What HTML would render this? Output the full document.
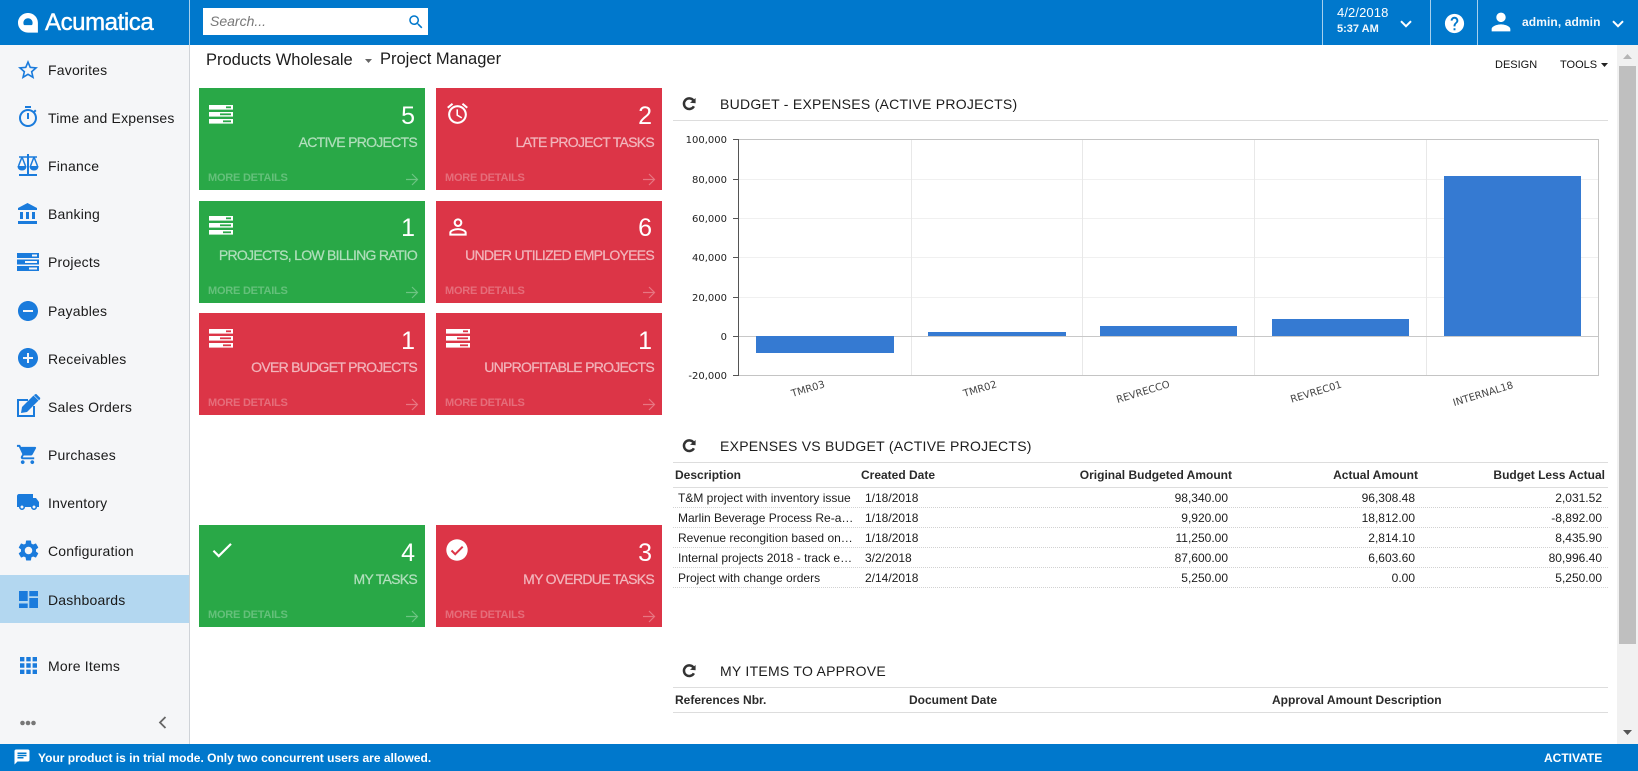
<!DOCTYPE html>
<html lang="en"><head><meta charset="utf-8"><title>Project Manager</title>
<style>
html,body{margin:0;padding:0;background:#fff}
body{width:1638px;height:771px;overflow:hidden;position:relative;font-family:"Liberation Sans",Arial,sans-serif;color:#1c1c1c}
.a,.card,.card *{position:absolute}
svg{position:absolute;overflow:visible}
.t{position:absolute;white-space:nowrap}
#side{position:absolute;left:0;top:45px;width:189px;height:699px;background:#f5f6f8;border-right:1px solid #cfd3d8}
.nav{position:absolute;left:48px;font-size:14px;line-height:20px;white-space:nowrap;letter-spacing:.2px;color:#1a1a1a}
.ic{fill:#1a7bdc}
.card{width:226px;height:102px;color:#fff}
.g{background:#29a847}.r{background:#dc3547}
.n{right:10px;top:13px;font-size:25px;line-height:30px}
.h{right:8px;top:45px;font-size:14px;line-height:18px;color:rgba(255,255,255,.6);white-space:nowrap;letter-spacing:-.72px;-webkit-text-stroke:.2px rgba(255,255,255,.6)}
.m{left:9px;top:83px;font-size:11px;line-height:14px;font-weight:bold;color:rgba(255,255,255,.28);white-space:nowrap;letter-spacing:-.22px}
.arr{left:207px;top:85px}
.sec{position:absolute;left:720px;font-size:14px;line-height:18px;white-space:nowrap;color:#1c1c1c;letter-spacing:.26px}
.ln{position:absolute;left:673px;width:935px;height:1px;background:#ddd}
.d{position:absolute;left:673px;width:935px;height:0;border-bottom:1px dotted #d2d2d2}
.th{position:absolute;font-size:12px;line-height:16px;font-weight:bold;color:#2a2a2a;white-space:nowrap}
.td{position:absolute;font-size:12px;line-height:16px;color:#1c1c1c;white-space:nowrap}
.rt{transform:translateX(-100%)}
</style></head><body>
<svg width="0" height="0" style="position:absolute">
<defs>
<g id="srv-g"><rect x="0" y="0" width="24" height="4.6" fill="#fff"/><rect x="17" y="1.4" width="5" height="1.8" fill="#29a847"/><rect x="0" y="7" width="24" height="4.6" fill="#fff"/><rect x="11" y="8.4" width="11" height="1.8" fill="#29a847"/><rect x="0" y="14" width="24" height="4.6" fill="#fff"/><rect x="14" y="15.4" width="8" height="1.8" fill="#29a847"/></g>
<g id="srv-r"><rect x="0" y="0" width="24" height="4.6" fill="#fff"/><rect x="17" y="1.4" width="5" height="1.8" fill="#dc3547"/><rect x="0" y="7" width="24" height="4.6" fill="#fff"/><rect x="11" y="8.4" width="11" height="1.8" fill="#dc3547"/><rect x="0" y="14" width="24" height="4.6" fill="#fff"/><rect x="14" y="15.4" width="8" height="1.8" fill="#dc3547"/></g>
<g id="arrow"><path d="M0 6.5H11M6 1l5.5 5.5L6 12" fill="none" stroke="#fff" stroke-opacity=".32" stroke-width="1.2"/></g>
<g id="ref"><path d="M12.4 4.400A5.300 5.300 0 1 0 12.900 10.300" fill="none" stroke="#333" stroke-width="2.500"/><path d="M9 6.800L14.600 2v5.200z" fill="#333"/></g>
</defs></svg>

<!-- header -->
<div class="a" style="left:0;top:0;width:1638px;height:45px;background:#0078cc"></div>
<div class="a" style="left:189px;top:0;width:1px;height:45px;background:rgba(255,255,255,.65)"></div>
<svg style="left:18px;top:13px" width="20" height="20" viewBox="0 0 20 20"><path fill="#fff" fill-rule="evenodd" d="M10 0C4.500 0 0 4.300 0 9.800 0 15.300 4.400 19.600 10 19.600h9.900V9.800C19.900 4.300 15.500 0 10 0zm0 5.200c2.600 0 4.600 2.100 4.600 4.600 0 .6-.1 1.300-.3 1.800-.2.300-.5.500-.8.500H6.500c-.3 0-.6-.2-.8-.5-.2-.5-.3-1.200-.3-1.800C5.400 7.300 7.400 5.200 10 5.200z"/></svg>
<div class="t" style="left:45px;top:8px;font-size:24px;line-height:30px;color:#fff;letter-spacing:-.42px;-webkit-text-stroke:.45px #fff">Acumatica</div>
<div class="a" style="left:203px;top:8px;width:225px;height:27px;background:#fff"></div>
<div class="t" style="left:210px;top:13px;font-size:14px;line-height:17px;font-style:italic;color:#777">Search...</div>
<svg style="left:407px;top:13px" width="18" height="18" viewBox="0 0 24 24"><path fill="#0078cc" d="M15.5 14h-.79l-.28-.27C15.41 12.59 16 11.11 16 9.5 16 5.910 13.090 3 9.500 3S3 5.910 3 9.500 5.910 16 9.500 16c1.610 0 3.090-.59 4.230-1.570l.27.28v.79l5 4.990L20.490 19l-4.990-5zm-6 0C7.010 14 5 11.990 5 9.500S7.010 5 9.500 5 14 7.010 14 9.500 11.990 14 9.500 14z"/></svg>

<div class="a" style="left:1322px;top:0;width:1px;height:45px;background:rgba(255,255,255,.65)"></div>
<div class="a" style="left:1430px;top:0;width:1px;height:45px;background:rgba(255,255,255,.65)"></div>
<div class="a" style="left:1477px;top:0;width:1px;height:45px;background:rgba(255,255,255,.65)"></div>
<div class="t" style="left:1337px;top:5px;font-size:13px;line-height:16px;color:#fff;letter-spacing:.1px">4/2/2018</div>
<div class="t" style="left:1337px;top:22px;font-size:11px;line-height:14px;color:#fff;font-weight:bold;opacity:.95">5:37 AM</div>
<svg style="left:1400px;top:20px" width="12" height="8" viewBox="0 0 12 8"><path d="M1 1.200l5 5 5-5" fill="none" stroke="#fff" stroke-width="2"/></svg>
<svg style="left:1442.500px;top:11.500px" width="23" height="23" viewBox="0 0 24 24"><path fill="#fff" d="M12 2C6.480 2 2 6.480 2 12s4.480 10 10 10 10-4.480 10-10S17.520 2 12 2zm1 17h-2v-2h2v2zm2.070-7.750l-.9.920C13.450 12.900 13 13.500 13 15h-2v-.5c0-1.100.45-2.100 1.170-2.830l1.240-1.260c.37-.36.590-.86.590-1.410 0-1.100-.9-2-2-2s-2 .9-2 2H8c0-2.210 1.790-4 4-4s4 1.790 4 4c0 .88-.36 1.680-.93 2.250z"/></svg>
<svg style="left:1486.500px;top:8px" width="28" height="28" viewBox="0 0 24 24"><path fill="#fff" d="M12 12c2.210 0 4-1.790 4-4s-1.790-4-4-4-4 1.790-4 4 1.790 4 4 4zm0 2c-2.670 0-8 1.340-8 4v2h16v-2c0-2.660-5.330-4-8-4z"/></svg>
<div class="t" style="left:1522px;top:14px;font-size:12px;line-height:16px;color:#fff;font-weight:bold;letter-spacing:.1px;opacity:.95">admin, admin</div>
<svg style="left:1612px;top:20px" width="12" height="8" viewBox="0 0 12 8"><path d="M1 1.200l5 5 5-5" fill="none" stroke="#fff" stroke-width="2"/></svg>

<!-- sidebar -->
<div id="side"></div>
<div class="a" style="left:0;top:575px;width:189px;height:48px;background:#b3d7f0"></div>

<svg style="left:16px;top:58px" width="24" height="24" viewBox="0 0 24 24"><path class="ic" d="M22 9.240l-7.190-.62L12 2 9.190 8.630 2 9.240l5.460 4.730L5.820 21 12 17.270 18.180 21l-1.630-7.030L22 9.240zM12 15.400l-3.760 2.270 1-4.280-3.320-2.880 4.380-.38L12 6.100l1.710 4.040 4.380.38-3.320 2.880 1 4.280L12 15.400z"/></svg>
<div class="nav" style="top:60px">Favorites</div>
<svg style="left:16px;top:105px" width="24" height="24" viewBox="0 0 24 24"><path class="ic" d="M15 1H9v2h6V1zm-4 13h2V8h-2v6zm8.030-6.610l1.420-1.420c-.43-.51-.9-.99-1.410-1.410l-1.420 1.420C16.070 4.740 14.120 4 12 4c-4.970 0-9 4.030-9 9s4.020 9 9 9 9-4.030 9-9c0-2.120-.74-4.070-1.970-5.610zM12 20c-3.870 0-7-3.130-7-7s3.130-7 7-7 7 3.130 7 7-3.130 7-7 7z"/></svg>
<div class="nav" style="top:108px">Time and Expenses</div>
<svg style="left:17px;top:154px" width="22" height="22" viewBox="0 0 22 22"><path fill="none" stroke="#1a7bdc" stroke-width="1.500" d="M5 3L1.500 12M5 3l3.500 9M17 3l-3.500 9M17 3l3.500 9"/><path fill="#1a7bdc" d="M10 0h2v20h-2zM2 2.200h18v1.600H2zM2 20h18v2H2zM.5 12h9c0 3-2 4.500-4.500 4.500S.5 15 .5 12zM12.500 12h9c0 3-2 4.500-4.500 4.500s-4.500-1.500-4.500-4.500z"/></svg>
<div class="nav" style="top:156px">Finance</div>
<svg style="left:16px;top:202px" width="24" height="24" viewBox="0 0 24 24"><path class="ic" d="M4 10v7h3v-7H4zm6 0v7h3v-7h-3zM2 22h19v-3H2v3zm14-12v7h3v-7h-3zm-4.500-9L2 6v2h19V6l-9.500-5z"/></svg>
<div class="nav" style="top:204px">Banking</div>
<svg style="left:17px;top:253px" width="22" height="18" viewBox="0 0 22 18"><path class="ic" d="M0 0h22v5H0zM0 6.500h22v5H0zM0 13h22v5H0z"/><path fill="#f5f6f8" d="M15 1.500h5v2h-5zM8 8h12v2H8zM12 14.500h8v2h-8z"/></svg>
<div class="nav" style="top:252px">Projects</div>
<svg style="left:16px;top:298.500px" width="24" height="24" viewBox="0 0 24 24"><path class="ic" d="M12 2C6.480 2 2 6.480 2 12s4.480 10 10 10 10-4.480 10-10S17.520 2 12 2zm5 11H7v-2h10v2z"/></svg>
<div class="nav" style="top:301px">Payables</div>
<svg style="left:16px;top:346px" width="24" height="24" viewBox="0 0 24 24"><path class="ic" d="M12 2C6.480 2 2 6.480 2 12s4.480 10 10 10 10-4.480 10-10S17.520 2 12 2zm5 11h-4v4h-2v-4H7v-2h4V7h2v4h4v2z"/></svg>
<div class="nav" style="top:349px">Receivables</div>
<svg style="left:16px;top:394px" width="25" height="24" viewBox="0 0 25 24"><path fill="none" stroke="#1a7bdc" stroke-width="2" d="M12 6H2v16h16V12"/><path class="ic" d="M5 19l1-6L17.500 1.500l5 5L11 18zM19 .2l1.300-.2 4 4-.3 1.200-1 1-5-5z"/></svg>
<div class="nav" style="top:397px">Sales Orders</div>
<svg style="left:16px;top:443px" width="23" height="23" viewBox="0 0 24 24"><path class="ic" d="M7 18c-1.100 0-1.990.9-1.990 2S5.900 22 7 22s2-.9 2-2-.9-2-2-2zM1 2v2h2l3.600 7.590-1.350 2.450c-.16.28-.25.61-.25.96 0 1.100.9 2 2 2h12v-2H7.420c-.14 0-.25-.11-.25-.25l.03-.12.9-1.630h7.450c.75 0 1.410-.41 1.750-1.030l3.580-6.490c.08-.14.12-.31.12-.48 0-.55-.45-1-1-1H5.210l-.94-2H1zm16 16c-1.100 0-1.990.9-1.990 2s.89 2 1.990 2 2-.9 2-2-.9-2-2-2z"/></svg>
<div class="nav" style="top:445px">Purchases</div>
<svg style="left:16px;top:490px" width="24" height="24" viewBox="0 0 24 24"><path class="ic" d="M20 8h-3V4H3c-1.100 0-2 .9-2 2v11h2c0 1.660 1.340 3 3 3s3-1.340 3-3h6c0 1.660 1.340 3 3 3s3-1.340 3-3h2v-5l-3-4zM6 18.500c-.83 0-1.500-.67-1.500-1.500s.67-1.500 1.500-1.500 1.500.67 1.500 1.500-.67 1.500-1.500 1.500zm12 0c-.83 0-1.500-.67-1.500-1.500s.67-1.500 1.500-1.500 1.500.67 1.500 1.500-.67 1.500-1.500 1.500z"/></svg>
<div class="nav" style="top:493px">Inventory</div>
<svg style="left:15.500px;top:538px" width="25" height="25" viewBox="0 0 24 24"><path class="ic" d="M19.140 12.940c.04-.3.06-.61.06-.94 0-.32-.02-.64-.07-.94l2.030-1.580c.18-.14.23-.41.12-.61l-1.920-3.320c-.12-.22-.37-.29-.59-.22l-2.390.96c-.5-.38-1.030-.7-1.620-.94l-.36-2.540c-.04-.24-.24-.41-.48-.41h-3.840c-.24 0-.43.17-.47.41l-.36 2.540c-.59.24-1.130.57-1.620.94l-2.390-.96c-.22-.08-.47 0-.59.22L2.740 8.870c-.12.21-.08.47.12.61l2.030 1.580c-.05.3-.09.63-.09.94s.02.64.07.94l-2.030 1.580c-.18.14-.23.41-.12.61l1.920 3.320c.12.22.37.29.59.22l2.390-.96c.5.38 1.030.7 1.620.94l.36 2.540c.05.24.24.41.48.41h3.840c.24 0 .44-.17.47-.41l.36-2.540c.59-.24 1.130-.56 1.620-.94l2.390.96c.22.08.47 0 .59-.22l1.920-3.320c.12-.22.07-.47-.12-.61l-2.010-1.580zM12 15.600c-1.980 0-3.600-1.620-3.600-3.600s1.620-3.600 3.600-3.600 3.600 1.620 3.600 3.600-1.620 3.600-3.600 3.600z"/></svg>
<div class="nav" style="top:541px">Configuration</div>
<svg style="left:19px;top:590px" width="19" height="19" viewBox="0 0 19 19"><path class="ic" d="M0 1h8.700v10H0zM0 13.500h8.700V18H0zM10.300 1H19v5.300h-8.700zM10.300 8H19v10h-8.700z"/></svg>
<div class="nav" style="top:590px">Dashboards</div>
<svg style="left:20px;top:657px" width="17" height="17" viewBox="0 0 17 17"><path class="ic" d="M0 0h4.400v4.400H0zM6.300 0h4.400v4.400H6.300zM12.600 0H17v4.400h-4.400zM0 6.300h4.400v4.400H0zM6.300 6.300h4.400v4.400H6.300zM12.600 6.300H17v4.400h-4.400zM0 12.600h4.400V17H0zM6.300 12.600h4.400V17H6.300zM12.600 12.600H17V17h-4.400z"/></svg>
<div class="nav" style="top:656px">More Items</div>
<svg style="left:20px;top:720px" width="16" height="6" viewBox="0 0 16 6"><circle cx="2.500" cy="3" r="2.300" fill="#777"/><circle cx="8" cy="3" r="2.300" fill="#777"/><circle cx="13.500" cy="3" r="2.300" fill="#777"/></svg>
<svg style="left:158px;top:716px" width="9" height="13" viewBox="0 0 9 13"><path d="M7.500 1L2 6.500 7.500 12" fill="none" stroke="#666" stroke-width="1.800"/></svg>

<!-- breadcrumb -->
<div class="t" style="left:206px;top:50px;font-size:16.5px;line-height:20px">Products Wholesale</div>
<svg style="left:365px;top:59px" width="7" height="4" viewBox="0 0 7 4"><path d="M0 0h7L3.500 4z" fill="#666"/></svg>
<div class="t" style="left:380px;top:49px;font-size:16.5px;line-height:20px">Project Manager</div>
<div class="t" style="left:1495px;top:58px;font-size:11px;line-height:14px;color:#111">DESIGN</div>
<div class="t" style="left:1560px;top:58px;font-size:11px;line-height:14px;color:#111">TOOLS</div>
<svg style="left:1601px;top:63px" width="7" height="4" viewBox="0 0 7 4"><path d="M0 0h7L3.500 4z" fill="#222"/></svg>

<!-- cards -->
<div class="card g" style="left:199px;top:88px"><svg style="left:10px;top:17px" width="24" height="19"><use href="#srv-g"/></svg><div class="n">5</div><div class="h">ACTIVE PROJECTS</div><div class="m">MORE DETAILS</div><svg class="arr" width="12" height="13"><use href="#arrow"/></svg></div>
<div class="card r" style="left:436px;top:88px"><svg style="left:9px;top:13px" width="25" height="25" viewBox="0 0 24 24"><path fill="#fff" d="M22 5.720l-4.600-3.860-1.290 1.530 4.600 3.860L22 5.720zM7.880 3.390L6.600 1.860 2 5.710l1.290 1.530 4.590-3.850zM12.500 8H11v6l4.750 2.850.75-1.230-4-2.370V8zM12 4c-4.970 0-9 4.030-9 9s4.030 9 9 9 9-4.030 9-9-4.030-9-9-9zm0 16c-3.870 0-7-3.130-7-7s3.130-7 7-7 7 3.130 7 7-3.130 7-7 7z"/></svg><div class="n">2</div><div class="h">LATE PROJECT TASKS</div><div class="m">MORE DETAILS</div><svg class="arr" width="12" height="13"><use href="#arrow"/></svg></div>
<div class="card g" style="left:199px;top:201px"><svg style="left:10px;top:15px" width="24" height="19"><use href="#srv-g"/></svg><div class="n" style="top:12px">1</div><div class="h">PROJECTS, LOW BILLING RATIO</div><div class="m">MORE DETAILS</div><svg class="arr" width="12" height="13"><use href="#arrow"/></svg></div>
<div class="card r" style="left:436px;top:201px"><svg style="left:8.500px;top:12.500px" width="26" height="26" viewBox="0 0 24 24"><path fill="#fff" d="M12 5.900c1.160 0 2.100.94 2.100 2.100s-.94 2.100-2.100 2.100S9.900 9.160 9.900 8s.94-2.100 2.100-2.100m0 9c2.970 0 6.100 1.460 6.100 2.100v1.100H5.900V17c0-.64 3.130-2.100 6.100-2.100M12 4C9.790 4 8 5.790 8 8s1.790 4 4 4 4-1.790 4-4-1.790-4-4-4zm0 9c-2.670 0-8 1.340-8 4v3h16v-3c0-2.660-5.330-4-8-4z"/></svg><div class="n" style="top:12px">6</div><div class="h">UNDER UTILIZED EMPLOYEES</div><div class="m">MORE DETAILS</div><svg class="arr" width="12" height="13"><use href="#arrow"/></svg></div>
<div class="card r" style="left:199px;top:313px"><svg style="left:10px;top:16px" width="24" height="19"><use href="#srv-r"/></svg><div class="n">1</div><div class="h">OVER BUDGET PROJECTS</div><div class="m">MORE DETAILS</div><svg class="arr" width="12" height="13"><use href="#arrow"/></svg></div>
<div class="card r" style="left:436px;top:313px"><svg style="left:10px;top:16px" width="24" height="19"><use href="#srv-r"/></svg><div class="n">1</div><div class="h">UNPROFITABLE PROJECTS</div><div class="m">MORE DETAILS</div><svg class="arr" width="12" height="13"><use href="#arrow"/></svg></div>
<div class="card g" style="left:199px;top:525px"><svg style="left:9.500px;top:12px" width="26" height="26" viewBox="0 0 24 24"><path fill="#fff" d="M9 16.200L4.800 12l-1.400 1.400L9 19 21 7l-1.400-1.400L9 16.200z"/></svg><div class="n">4</div><div class="h">MY TASKS</div><div class="m">MORE DETAILS</div><svg class="arr" width="12" height="13"><use href="#arrow"/></svg></div>
<div class="card r" style="left:436px;top:525px"><svg style="left:10px;top:14px" width="22" height="22" viewBox="0 0 22 22"><circle cx="11" cy="11" r="10.700" fill="#fff"/><path d="M5.500 11.500l3.700 3.700 7.500-7.500" fill="none" stroke="#dc3547" stroke-width="2"/></svg><div class="n">3</div><div class="h">MY OVERDUE TASKS</div><div class="m">MORE DETAILS</div><svg class="arr" width="12" height="13"><use href="#arrow"/></svg></div>

<!-- section 1 -->
<svg style="left:681px;top:96px" width="16" height="16" viewBox="0 0 16 16"><use href="#ref"/></svg>
<div class="sec" style="top:95px">BUDGET - EXPENSES (ACTIVE PROJECTS)</div>
<div class="ln" style="top:120px"></div>

<svg style="left:0;top:0" width="1638" height="771" viewBox="0 0 1638 771">
<g stroke="#f0f0f0" stroke-width="1"><path d="M738.500 179.500H1598M738.500 218.500H1598M738.500 257.500H1598M738.500 297.500H1598"/></g>
<g stroke="#e8e8e8" stroke-width="1"><path d="M911.500 139V375M1082.500 139V375M1254.500 139V375M1426.500 139V375"/></g>
<path d="M738 139.500H1598.500V375.500H738" fill="none" stroke="#c4c4c4"/>
<path d="M738 336.500H1598" stroke="#c8c8c8"/>
<path d="M738.500 139V376M733 139.500H738M733 179.500H738M733 218.500H738M733 257.500H738M733 297.500H738M733 336.500H738M733 375.500H738" stroke="#555" fill="none"/>
<g fill="#357ad2"><rect x="756" y="336" width="138" height="17"/><rect x="928" y="332" width="138" height="4"/><rect x="1100" y="326" width="137" height="10"/><rect x="1272" y="319" width="137" height="17"/><rect x="1444" y="176" width="137" height="160"/></g>
<g font-family="'DejaVu Sans',sans-serif" font-size="10" fill="#222" text-anchor="end"><text x="727" y="143">100,000</text><text x="727" y="183">80,000</text><text x="727" y="222">60,000</text><text x="727" y="261">40,000</text><text x="727" y="301">20,000</text><text x="727" y="340">0</text><text x="727" y="379">-20,000</text></g>
<g font-family="'DejaVu Sans',sans-serif" font-size="10" fill="#444" text-anchor="middle"><text transform="translate(809 392) rotate(-17)">TMR03</text><text transform="translate(981 392) rotate(-17)">TMR02</text><text transform="translate(1144 395) rotate(-17)">REVRECCO</text><text transform="translate(1317 395) rotate(-17)">REVREC01</text><text transform="translate(1484 397) rotate(-17)">INTERNAL18</text></g>
</svg>

<!-- section 2 -->
<svg style="left:681px;top:438px" width="16" height="16" viewBox="0 0 16 16"><use href="#ref"/></svg>
<div class="sec" style="top:437px">EXPENSES VS BUDGET (ACTIVE PROJECTS)</div>
<div class="ln" style="top:462px"></div>
<div class="th" style="left:675px;top:467px">Description</div>
<div class="th" style="left:861px;top:467px">Created Date</div>
<div class="th rt" style="left:1232px;top:467px">Original Budgeted Amount</div>
<div class="th rt" style="left:1418px;top:467px">Actual Amount</div>
<div class="th rt" style="left:1605px;top:467px">Budget Less Actual</div>
<div class="ln" style="top:487px"></div>

<div class="td" style="left:678px;top:490px">T&amp;M project with inventory issue</div><div class="td" style="left:865px;top:490px">1/18/2018</div><div class="td rt" style="left:1228px;top:490px">98,340.00</div><div class="td rt" style="left:1415px;top:490px">96,308.48</div><div class="td rt" style="left:1602px;top:490px">2,031.52</div>
<div class="d" style="top:507px"></div>
<div class="td" style="left:678px;top:510px">Marlin Beverage Process Re-a…</div><div class="td" style="left:865px;top:510px">1/18/2018</div><div class="td rt" style="left:1228px;top:510px">9,920.00</div><div class="td rt" style="left:1415px;top:510px">18,812.00</div><div class="td rt" style="left:1602px;top:510px">-8,892.00</div>
<div class="d" style="top:527px"></div>
<div class="td" style="left:678px;top:530px">Revenue recongition based on…</div><div class="td" style="left:865px;top:530px">1/18/2018</div><div class="td rt" style="left:1228px;top:530px">11,250.00</div><div class="td rt" style="left:1415px;top:530px">2,814.10</div><div class="td rt" style="left:1602px;top:530px">8,435.90</div>
<div class="d" style="top:547px"></div>
<div class="td" style="left:678px;top:550px">Internal projects 2018 - track e…</div><div class="td" style="left:865px;top:550px">3/2/2018</div><div class="td rt" style="left:1228px;top:550px">87,600.00</div><div class="td rt" style="left:1415px;top:550px">6,603.60</div><div class="td rt" style="left:1602px;top:550px">80,996.40</div>
<div class="d" style="top:567px"></div>
<div class="td" style="left:678px;top:570px">Project with change orders</div><div class="td" style="left:865px;top:570px">2/14/2018</div><div class="td rt" style="left:1228px;top:570px">5,250.00</div><div class="td rt" style="left:1415px;top:570px">0.00</div><div class="td rt" style="left:1602px;top:570px">5,250.00</div>
<div class="d" style="top:587px"></div>

<!-- section 3 -->
<svg style="left:681px;top:663px" width="16" height="16" viewBox="0 0 16 16"><use href="#ref"/></svg>
<div class="sec" style="top:662px">MY ITEMS TO APPROVE</div>
<div class="ln" style="top:687px"></div>
<div class="th" style="left:675px;top:692px">References Nbr.</div>
<div class="th" style="left:909px;top:692px">Document Date</div>
<div class="th" style="left:1272px;top:692px">Approval Amount Description</div>
<div class="ln" style="top:712px"></div>

<!-- scrollbar -->
<div class="a" style="left:1617px;top:45px;width:21px;height:699px;background:#f1f1f1"></div>
<div class="a" style="left:1619px;top:66px;width:17px;height:578px;background:#bfbfbf"></div>
<svg style="left:1623px;top:54px" width="9" height="5" viewBox="0 0 9 5"><path d="M0 5h9L4.500 0z" fill="#b5b5b5"/></svg>
<svg style="left:1623px;top:730px" width="9" height="5" viewBox="0 0 9 5"><path d="M0 0h9L4.500 5z" fill="#555"/></svg>

<!-- footer -->
<div class="a" style="left:0;top:744px;width:1638px;height:27px;background:#0078cc"></div>
<svg style="left:12.500px;top:748px" width="18" height="18" viewBox="0 0 24 24"><path fill="#fff" d="M20 2H4c-1.100 0-1.990.9-1.990 2L2 22l4-4h14c1.100 0 2-.9 2-2V4c0-1.100-.9-2-2-2zM6 9h12v2H6V9zm8 5H6v-2h8v2zm4-6H6V6h12v2z"/></svg>
<div class="t" style="left:38px;top:750px;font-size:12px;line-height:16px;font-weight:bold;color:#fff">Your product is in trial mode. Only two concurrent users are allowed.</div>
<div class="t" style="left:1544px;top:750px;font-size:12px;line-height:16px;font-weight:bold;color:#fff">ACTIVATE</div>
</body></html>
